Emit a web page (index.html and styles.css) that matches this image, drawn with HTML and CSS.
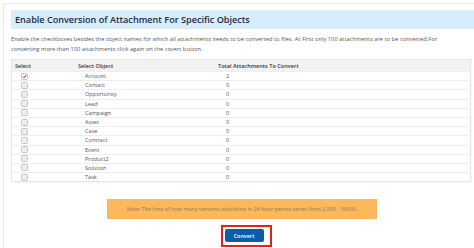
FILE: index.html
```html
<!DOCTYPE html>
<html lang="en">
<head>
    <meta charset="UTF-8">
    <title>Convert Attachments</title>
    <link rel="stylesheet" href="styles.css">
</head>
<body>

<div class="page">
    <div class="title-bar">
        <h1>Enable Conversion of Attachment For Specific Objects</h1>
    </div>

    <p class="intro">Enable the checkboxes besides the object names for which all attachments needs to be converted to files. At First only 100 attachments are to be converted.For converting more than 100 attachments click again on the covert button.</p>

    <table class="objects">
        <thead>
            <tr>
                <th class="col-select">Select</th>
                <th class="col-object">Select Object</th>
                <th>Total Attachments To Convert</th>
            </tr>
        </thead>
        <tbody>
            <tr><td><span class="cb checked"><svg viewBox="0 0 8 8"><path d="M1.5 4.2 L3.3 6 L6.8 1.6" fill="none" stroke="#1a1a1a" stroke-width="1.4"/></svg></span></td><td>Account</td><td>2</td></tr>
            <tr><td><span class="cb"></span></td><td>Contact</td><td>0</td></tr>
            <tr><td><span class="cb"></span></td><td>Opportunity</td><td>0</td></tr>
            <tr><td><span class="cb"></span></td><td>Lead</td><td>0</td></tr>
            <tr><td><span class="cb"></span></td><td>Campaign</td><td>0</td></tr>
            <tr><td><span class="cb"></span></td><td>Asset</td><td>0</td></tr>
            <tr><td><span class="cb"></span></td><td>Case</td><td>0</td></tr>
            <tr><td><span class="cb"></span></td><td>Contract</td><td>0</td></tr>
            <tr><td><span class="cb"></span></td><td>Event</td><td>0</td></tr>
            <tr><td><span class="cb"></span></td><td>Product2</td><td>0</td></tr>
            <tr><td><span class="cb"></span></td><td>Solution</td><td>0</td></tr>
            <tr><td><span class="cb"></span></td><td>Task</td><td>0</td></tr>
        </tbody>
    </table>

    <div class="note">Note: The limit of how many versions published in 24 hour period varies from 2,500 - 36000.</div>

    <div class="actions">
        <span class="highlight"><button class="btn-convert">Convert</button></span>
    </div>
</div>

</body>
</html>
```

FILE: styles.css
```css
body {
    margin: 0;
    padding: 0;
    background-color: #fff;
    font-family: "Open Sans", Arial, sans-serif;
    color: #444;
    overflow: hidden;
}

.page {
    margin: 3px 0 0 3px;
    height: calc(100vh - 3px);
    border-top: 1px solid #e6e6e6;
    border-left: 1px solid #e6e6e6;
    padding: 6px 0 0 7px;
    box-sizing: border-box;
}

.title-bar {
    background-color: #d8ecfd;
    height: 19px;
    padding-left: 4px;
    display: flex;
    align-items: center;
}

.title-bar h1 {
    margin: 0;
    font-size: 9.1px;
    font-weight: 600;
    color: #1b2a3f;
}

.intro {
    margin: 5px 0 0 0;
    width: 448px;
    font-size: 5.75px;
    line-height: 10px;
    color: #555;
}

.objects {
    margin-top: 5px;
    width: 460px;
    border-collapse: collapse;
    border: 1px solid #e4e4e4;
    box-shadow: 1px 1px 2px rgba(0, 0, 0, 0.04);
    font-size: 5.6px;
}

.objects th {
    background-color: #f3f3f3;
    height: 11px;
    padding: 0 0 0 3px;
    text-align: left;
    font-weight: 600;
    color: #333;
}

.objects .col-select {
    width: 60px;
}

.objects .col-object {
    width: 137px;
}

.objects td {
    height: 8.2px;
    padding: 0;
    border-top: 1px solid #eeeeee;
    color: #555;
}

.objects td:nth-child(1) {
    padding-left: 9px;
}

.objects td:nth-child(2) {
    padding-left: 10px;
}

.objects td:nth-child(3) {
    padding-left: 11px;
}

.cb {
    display: block;
    width: 5px;
    height: 5px;
    border: 1px solid #c4c4c4;
    border-radius: 1.5px;
    background-color: #eeeeee;
}

.cb svg {
    display: block;
    width: 5px;
    height: 5px;
}

.cb.checked {
    background-color: #fff;
}

.note {
    margin: 17px 0 0 96px;
    width: 270px;
    height: 20px;
    background-color: #fdb75c;
    font-size: 5.4px;
    color: #8c7a66;
    display: flex;
    align-items: center;
    justify-content: center;
}

.actions {
    width: 460px;
    display: flex;
    justify-content: center;
    margin-top: 6px;
}

.highlight {
    display: inline-block;
    margin-left: 10px;
    border: 2px solid #e2231a;
    padding: 2px 6px 3px 2px;
}

.btn-convert {
    display: block;
    width: 39px;
    height: 13px;
    border: none;
    border-radius: 2px;
    padding: 0;
    background-color: #0b5cab;
    color: #fff;
    font-family: "Open Sans", Arial, sans-serif;
    font-size: 5.4px;
    font-weight: 600;
}
```
